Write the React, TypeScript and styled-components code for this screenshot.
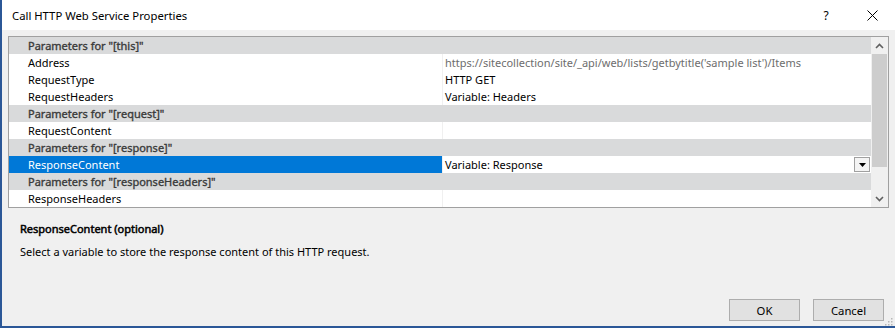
import React from 'react'
import styled, { createGlobalStyle } from 'styled-components'

const GlobalStyle = createGlobalStyle`
  html, body {
    margin: 0;
    padding: 0;
    background: #f0f0f0;
  }
  body {
    font-family: "Noto Sans", "Open Sans", sans-serif;
    font-size: 11px;
    color: #000;
  }
`

const Window = styled.div`
  width: 895px;
  height: 328px;
  box-sizing: border-box;
  display: flex;
  flex-direction: column;
  background: #f0f0f0;
  border-left: 2px solid #2b5797;
  border-bottom: 2px solid #2b5797;
  position: relative;
  overflow: hidden;
`

const TitleBar = styled.div`
  height: 30px;
  flex-shrink: 0;
  display: flex;
  align-items: center;
  background: #fff;
  padding-left: 10px;
`

const Title = styled.div`
  flex: 1;
  font-size: 11.3px;
  padding-top: 1px;
`

const TitleButton = styled.div<{ width: number }>`
  width: ${({ width }) => width}px;
  height: 30px;
  display: flex;
  align-items: center;
  justify-content: center;
  font-size: 12px;
`

const Body = styled.div`
  flex: 1;
  display: flex;
  flex-direction: column;
  padding: 6px 6px 0 6px;
`

const Grid = styled.div`
  height: 172px;
  box-sizing: border-box;
  border: 1px solid #a0a0a0;
  background: #fff;
  display: flex;
`

const Rows = styled.div`
  flex: 1;
  display: flex;
  flex-direction: column;
`

const Row = styled.div<{ category?: boolean }>`
  height: 17px;
  display: flex;
  background: ${({ category }) => (category ? '#d9dadb' : '#fff')};
  color: ${({ category }) => (category ? '#3a3a3a' : '#000')};
  -webkit-text-stroke: ${({ category }) => (category ? '0.35px #3a3a3a' : '0')};
  line-height: 17px;
  white-space: nowrap;
`

const NameCell = styled.div<{ selected?: boolean }>`
  width: 414px;
  padding-left: 19px;
  flex-shrink: 0;
  background: ${({ selected }) => (selected ? '#0078d7' : 'transparent')};
  color: ${({ selected }) => (selected ? '#fff' : 'inherit')};
  border-right: 1px solid #f0f0f0;
`

const ValueCell = styled.div<{ muted?: boolean }>`
  flex: 1;
  padding-left: 2px;
  display: flex;
  align-items: center;
  color: ${({ muted }) => (muted ? '#6d6d6d' : '#000')};
`

const ValueText = styled.span`
  flex: 1;
`

const DropButton = styled.div`
  width: 14px;
  height: 13px;
  margin-right: 1px;
  border: 1px solid #a0a0a0;
  background: #f4f4f4;
  display: flex;
  align-items: center;
  justify-content: center;
`

const CategoryLabel = styled.div`
  padding-left: 19px;
`

const Scrollbar = styled.div`
  width: 17px;
  flex-shrink: 0;
  background: #f0f0f0;
  display: flex;
  flex-direction: column;
  align-items: center;
`

const ScrollArrow = styled.div`
  height: 17px;
  width: 17px;
  display: flex;
  align-items: center;
  justify-content: center;
`

const ScrollTrack = styled.div`
  flex: 1;
  width: 15px;
`

const ScrollThumb = styled.div`
  height: 113px;
  background: #cdcdcd;
`

const Description = styled.div`
  padding: 13px 0 0 12px;
  height: 78px;
`

const DescTitle = styled.div`
  -webkit-text-stroke: 0.5px #000;
  height: 16px;
  line-height: 16px;
`

const DescText = styled.div`
  margin-top: 7px;
  line-height: 16px;
`

const Footer = styled.div`
  display: flex;
  justify-content: flex-end;
  gap: 13px;
  padding-right: 5px;
`

const Button = styled.button`
  width: 71px;
  height: 22px;
  box-sizing: border-box;
  border: 1px solid #adadad;
  background: #e1e1e1;
  font-family: inherit;
  font-size: 11.3px;
  color: #000;
  padding: 0;
`

const Grip = styled.div`
  position: absolute;
  right: 2px;
  bottom: 2px;
  width: 10px;
  height: 10px;
`

const Chevron: React.FC<{ up?: boolean }> = ({ up }) => (
  <svg width="9" height="6" viewBox="0 0 9 6">
    <path
      d={up ? 'M1 5 L4.5 1.5 L8 5' : 'M1 1 L4.5 4.5 L8 1'}
      fill="none"
      stroke="#606060"
      strokeWidth="1.6"
    />
  </svg>
)

type Prop = { name: string; value?: string; muted?: boolean; selected?: boolean }
type Section = { title: string; props: Prop[] }

const sections: Section[] = [
  {
    title: 'Parameters for "[this]"',
    props: [
      { name: 'Address', value: "https://sitecollection/site/_api/web/lists/getbytitle('sample list')/Items", muted: true },
      { name: 'RequestType', value: 'HTTP GET' },
      { name: 'RequestHeaders', value: 'Variable: Headers' },
    ],
  },
  { title: 'Parameters for "[request]"', props: [{ name: 'RequestContent' }] },
  { title: 'Parameters for "[response]"', props: [{ name: 'ResponseContent', value: 'Variable: Response', selected: true }] },
  { title: 'Parameters for "[responseHeaders]"', props: [{ name: 'ResponseHeaders' }] },
]

const App: React.FC = () => {
  return (
    <>
      <GlobalStyle />
      <Window>
        <TitleBar>
          <Title>Call HTTP Web Service Properties</Title>
          <TitleButton width={46}>?</TitleButton>
          <TitleButton width={46}>
            <svg width="11" height="11" viewBox="0 0 11 11">
              <path d="M0.5 0.5 L10.5 10.5 M10.5 0.5 L0.5 10.5" stroke="#000" strokeWidth="1" />
            </svg>
          </TitleButton>
        </TitleBar>
        <Body>
          <Grid>
            <Rows>
              {sections.map((s) => (
                <React.Fragment key={s.title}>
                  <Row category>
                    <CategoryLabel>{s.title}</CategoryLabel>
                  </Row>
                  {s.props.map((p) => (
                    <Row key={p.name}>
                      <NameCell selected={p.selected}>{p.name}</NameCell>
                      <ValueCell muted={p.muted}>
                        <ValueText>{p.value}</ValueText>
                        {p.selected && (
                          <DropButton>
                            <svg width="7" height="4" viewBox="0 0 7 4">
                              <path d="M0 0 H7 L3.5 4 Z" fill="#000" />
                            </svg>
                          </DropButton>
                        )}
                      </ValueCell>
                    </Row>
                  ))}
                </React.Fragment>
              ))}
            </Rows>
            <Scrollbar>
              <ScrollArrow>
                <Chevron up />
              </ScrollArrow>
              <ScrollTrack>
                <ScrollThumb />
              </ScrollTrack>
              <ScrollArrow>
                <Chevron />
              </ScrollArrow>
            </Scrollbar>
          </Grid>
          <Description>
            <DescTitle>ResponseContent (optional)</DescTitle>
            <DescText>Select a variable to store the response content of this HTTP request.</DescText>
          </Description>
          <Footer>
            <Button>OK</Button>
            <Button>Cancel</Button>
          </Footer>
        </Body>
        <Grip>
          <svg width="10" height="10" viewBox="0 0 10 10">
            {[
              [8, 2],
              [5, 5], [8, 5],
              [2, 8], [5, 8], [8, 8],
            ].map(([x, y]) => (
              <rect key={`${x}-${y}`} x={x} y={y} width="1.5" height="1.5" fill="#b8b8b8" />
            ))}
          </svg>
        </Grip>
      </Window>
    </>
  )
}

export default App
